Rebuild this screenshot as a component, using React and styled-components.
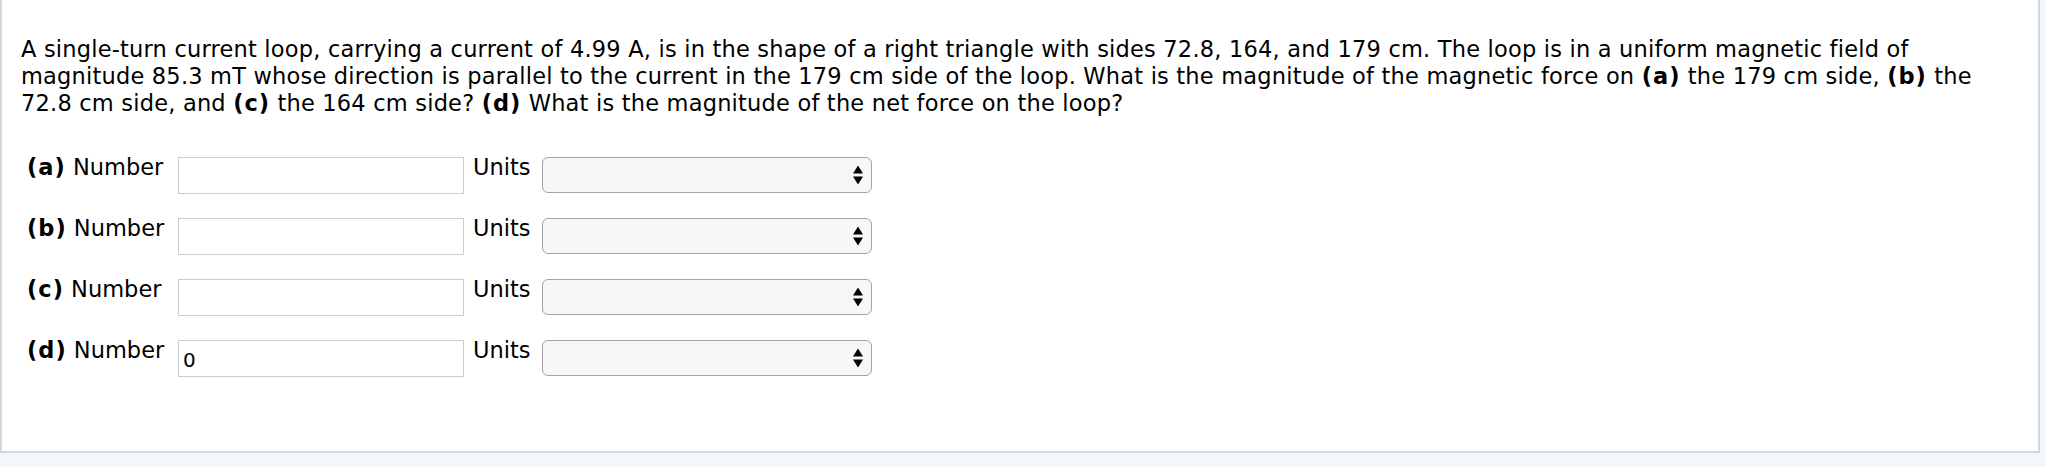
import React from "react";
import styled, { createGlobalStyle } from "styled-components";

const Global = createGlobalStyle`
  html, body { margin: 0; padding: 0; background: #f3f7fa; }
  body { font-family: "DejaVu Sans", Verdana, sans-serif; color: #000; }
`;

const Panel = styled.div`
  box-sizing: border-box;
  width: 2040px;
  height: 453px;
  background: #fff;
  border-left: 2px solid #cfd9e4;
  border-right: 2px solid #cfd9e4;
  border-bottom: 2px solid #cfd9e4;
  padding: 36px 0 0 19px;
`;

const Question = styled.p`
  margin: 0;
  font-size: 22.5px;
  letter-spacing: 0.2px;
  line-height: 27px;
  white-space: nowrap;

  b {
    letter-spacing: 1px;
  }
`;

const Rows = styled.div`
  display: flex;
  flex-direction: column;
  gap: 24px;
  margin-top: 40px;
  padding-left: 6px;
`;

const Row = styled.div`
  display: grid;
  grid-template-columns: 151px 286px 78px 331px;
  align-items: start;
  font-size: 22.5px;
  line-height: 21.5px;
`;

const Label = styled.div`
  white-space: nowrap;

  b {
    letter-spacing: 1px;
  }
`;

const UnitsLabel = styled.div`
  padding-left: 9px;
`;

const NumberInput = styled.input`
  box-sizing: border-box;
  width: 286px;
  height: 37px;
  border: 1px solid #cccccc;
  border-radius: 0;
  padding: 2px 4px 0;
  font-family: "DejaVu Sans", Verdana, sans-serif;
  font-size: 20px;
  color: #000;
  background: #fff;
  outline: none;
`;

const SelectWrap = styled.div`
  position: relative;
  width: 330px;
  height: 36px;
`;

const Select = styled.select`
  appearance: none;
  -webkit-appearance: none;
  box-sizing: border-box;
  width: 100%;
  height: 100%;
  border: 1.5px solid #a3a3a3;
  border-radius: 6px;
  background: #f7f7f7;
  font-family: "DejaVu Sans", Verdana, sans-serif;
  font-size: 20px;
`;

const Arrows = styled.svg`
  position: absolute;
  right: 9px;
  top: 50%;
  transform: translateY(-50%);
  pointer-events: none;
`;

const SelectArrows = () => (
  <Arrows width="10" height="19" viewBox="0 0 10 19">
    <path d="M5 0 L10 8 L0 8 Z" fill="#000" />
    <path d="M0 11 L10 11 L5 19 Z" fill="#000" />
  </Arrows>
);

const parts = [
  { key: "a", value: "" },
  { key: "b", value: "" },
  { key: "c", value: "" },
  { key: "d", value: "0" },
];

export default function App() {
  return (
    <>
      <Global />
      <Panel>
        <Question>
          A single-turn current loop, carrying a current of 4.99 A, is in the shape of a right triangle with sides 72.8, 164, and 179 cm. The loop is in a uniform magnetic field of
          <br />
          magnitude 85.3 mT whose direction is parallel to the current in the 179 cm side of the loop. What is the magnitude of the magnetic force on <b>(a)</b> the 179 cm side, <b>(b)</b> the
          <br />
          72.8 cm side, and <b>(c)</b> the 164 cm side? <b>(d)</b> What is the magnitude of the net force on the loop?
        </Question>
        <Rows>
          {parts.map((p) => (
            <Row key={p.key}>
              <Label>
                <b>({p.key})</b> Number
              </Label>
              <NumberInput defaultValue={p.value} />
              <UnitsLabel>Units</UnitsLabel>
              <SelectWrap>
                <Select defaultValue="">
                  <option value=""></option>
                </Select>
                <SelectArrows />
              </SelectWrap>
            </Row>
          ))}
        </Rows>
      </Panel>
    </>
  );
}
